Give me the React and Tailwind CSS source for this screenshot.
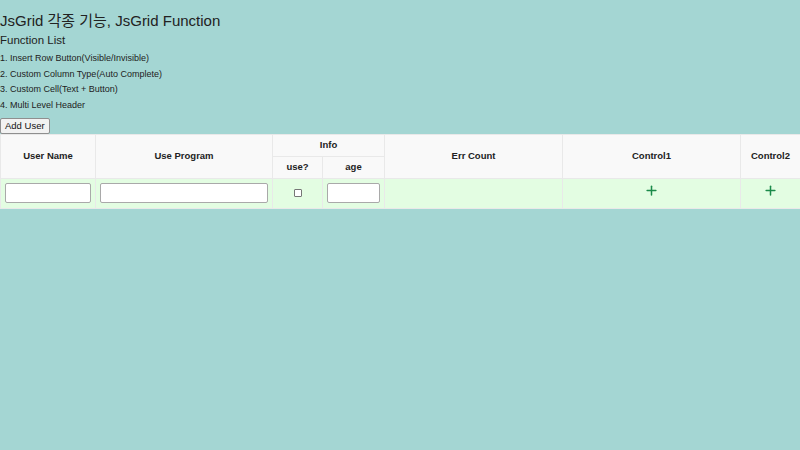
import { Plus } from 'lucide-react';

const th = 'border border-[#e9e9e9] bg-[#f9f9f9] text-[9.5px] font-bold text-[#222] text-center align-middle p-0';
const td = 'border border-[#e9e9e9] p-0 align-middle text-center';
const inputCls = 'block w-full h-[20px] bg-white border border-[#a9a9a9] rounded-[2px] outline-none';

export default function App() {
  return (
    <div className="min-h-screen bg-[#a4d6d3] text-[#222] font-['Liberation_Sans','Noto_Sans_CJK_KR',sans-serif]">
      <div className="pt-[11px]">
        <h1 className="text-[15px] leading-[19px]">JsGrid 각종 기능, JsGrid Function</h1>
        <h2 className="text-[11.5px] leading-[15px] mt-[3px]">Function List</h2>
        <ul className="text-[9px] leading-[15.7px] mt-[3px]">
          <li>1. Insert Row Button(Visible/Invisible)</li>
          <li>2. Custom Column Type(Auto Complete)</li>
          <li>3. Custom Cell(Text + Button)</li>
          <li>4. Multi Level Header</li>
        </ul>
        <button className="block mt-[4px] h-[16px] px-[4px] text-[9.5px] leading-[14px] bg-[#f2f2f2] border border-[#8f8f8f] rounded-[2px] text-[#111]">
          Add User
        </button>
      </div>

      <table className="w-full border-collapse table-fixed">
        <colgroup>
          <col className="w-[95px]" />
          <col className="w-[177px]" />
          <col className="w-[50px]" />
          <col className="w-[62px]" />
          <col className="w-[178px]" />
          <col className="w-[178px]" />
          <col className="w-[60px]" />
        </colgroup>
        <thead>
          <tr className="h-[22px]">
            <th rowSpan={2} className={th}>User Name</th>
            <th rowSpan={2} className={th}>Use Program</th>
            <th colSpan={2} className={th}>Info</th>
            <th rowSpan={2} className={th}>Err Count</th>
            <th rowSpan={2} className={th}>Control1</th>
            <th rowSpan={2} className={th}>Control2</th>
          </tr>
          <tr className="h-[22px]">
            <th className={th}>use?</th>
            <th className={th}>age</th>
          </tr>
        </thead>
        <tbody>
          <tr className="h-[30px] bg-[#e3fde2]">
            <td className={`${td} px-[4px]`}>
              <input className={inputCls} />
            </td>
            <td className={`${td} px-[4px]`}>
              <input className={inputCls} />
            </td>
            <td className={td}>
              <div className="flex justify-center">
                <span className="block w-[8px] h-[8px] border border-[#767676] rounded-[1px] bg-white" />
              </div>
            </td>
            <td className={`${td} px-[4px]`}>
              <input className={inputCls} />
            </td>
            <td className={td}></td>
            <td className={td}>
              <div className="flex justify-center -mt-[5px]">
                <Plus className="w-[15px] h-[15px] text-[#1b8a4a]" strokeWidth={2.4} />
              </div>
            </td>
            <td className={td}>
              <div className="flex justify-center -mt-[5px]">
                <Plus className="w-[15px] h-[15px] text-[#1b8a4a]" strokeWidth={2.4} />
              </div>
            </td>
          </tr>
        </tbody>
      </table>
    </div>
  );
}
